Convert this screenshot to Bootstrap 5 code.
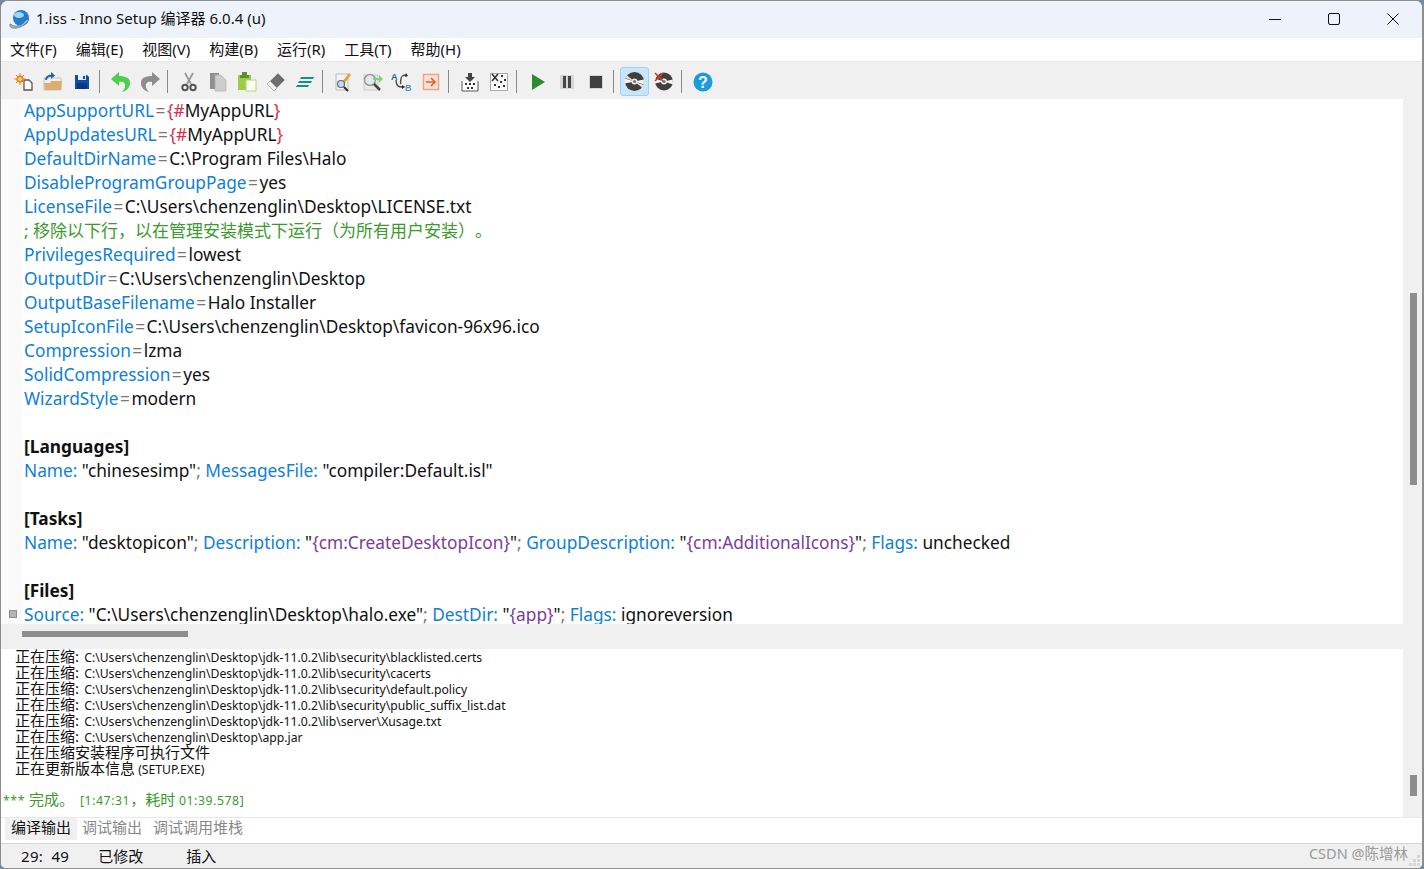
<!DOCTYPE html>
<html lang="zh-CN">
<head>
  <meta charset="UTF-8">
  <meta name="viewport" content="width=device-width, initial-scale=1.0">
  <title>1.iss - Inno Setup 编译器 6.0.4 (u)</title>
  <link href="https://cdn.jsdelivr.net/npm/bootstrap@5.3.3/dist/css/bootstrap.min.css" rel="stylesheet">
  <style>
    html, body { height: 100%; overflow: hidden; background: #6f8ba5; }
    body { font-family: "Noto Sans", "Noto Sans CJK SC", sans-serif; color: #111; text-spacing-trim: space-all; }
    .win { height: 869px; width: 1424px; background: #fff; border: 1px solid #8e8e8e; border-width: 1px 2px 1px 1px; border-radius: 8px 8px 6px 6px; overflow: hidden; }
    .titlebar { height: 37px; flex: none; background: #eef3fb; font-size: 15px; padding-left: 8px; }
    .titlebar .ttl { margin: -2px 0 0 5px; }
    .wbtn { width: 59px; height: 37px; margin-top: -2px; }
    .menubar { height: 24px; flex: none; font-size: 15px; padding-left: 9px; gap: 19px; border-bottom: 1px solid #e8e8e8; }
    .toolbar { height: 37px; flex: none; background: #f0f0f0; padding: 2px 0 0 8px; }
    .tb { width: 29px; height: 29px; flex: none; border: 1px solid transparent; border-radius: 3px; }
    .tb.on { background: #cce4f7; border-color: #99d1ff; }
    .tsep { width: 1px; height: 23px; background: #888; margin: 0 6px 0 3px; flex: none; }
    .editor { height: 525px; flex: none; }
    .gutter { width: 21px; flex: none; background: #fafafa; position: relative; }
    .mark { position: absolute; left: 8px; top: 511px; width: 6px; height: 6px; background: #b5b5b5; border: 1px solid #8f8f8f; }
    .code { font-size: 17.3px; line-height: 24px; overflow: hidden; padding-left: 2px; white-space: pre; }
    .k { color: #0f7fd8; } .c { color: #3a9a2c; }
    .p { color: #777; }
    .e { color: #777; padding: 0 1.5px; }
    .r { color: #d8304e; } .v { color: #7a3d9c; }
    .code .c { font-size: 17px; }
    .vbar { width: 19px; flex: none; background: #f0f0f0; }
    .vbar i { display: block; width: 7px; margin-left: 7px; background: #8e8e8e; }
    .thumb1 { height: 192px; margin-top: 194px; }
    .thumb2 { height: 21px; margin-top: 126px; }
    .hbar { height: 25px; flex: none; background: #f0f0f0; padding: 7px 0 0 21px; }
    .hbar i { display: block; width: 166px; height: 6px; background: #8e8e8e; }
    .output { height: 168px; flex: none; }
    .log { font-size: 12.2px; padding-left: 14px; margin-top: -1px; white-space: pre; }
    .log div { height: 16px; line-height: 16px; }
    .log b { font-weight: 400; font-size: 15px; letter-spacing: 0; }
    .log .path b { margin-right: 2px; }
    .log .done { color: #3a9a2c; margin: 15px 0 0 -12px; letter-spacing: .6px; }
    .done .m { margin: 0 6px 0 4px; }
    .tabs { height: 26px; flex: none; border-top: 1px solid #e8e8e8; font-size: 15px; padding-left: 4px; color: #888; }
    .tabs span { padding: 0 6px; line-height: 19px; height: 22px; margin-right: -1px; }
    .tabs .act { background: #f0f0f0; color: #111; }
    .statusbar { height: 25px; flex: none; background: #f0f0f0; border-top: 1px solid #d4d4d4; font-size: 15px; position: relative; }
    .statusbar > span { line-height: 24px; }
    .st-pos { margin-left: 20px; letter-spacing: .3px; }
    .st-mod { margin-left: 29px; }
    .st-ins { margin-left: 43px; }
    .wm { position: absolute; right: 14px; top: -3px; color: #9a9a9a; font-size: 14.5px; }
    .grip { position: absolute; right: 1px; bottom: 1px; }
  </style>
</head>
<body>
<div class="win d-flex flex-column">
  <div class="titlebar d-flex align-items-center">
    <svg width="22" height="22" viewBox="0 0 22 22"><circle cx="12" cy="9" r="8" fill="#1f7fcb"/><ellipse cx="10" cy="6" rx="5" ry="3" fill="#9fd6f7"/><path d="M1 15c-1 3 2 5 7 4 5-1 10-4 12-9l-3 1c-2 3-6 6-9 6-3 0-5 0-6-2z" fill="#9db3c4" stroke="#4f6f8a" stroke-width=".6"/></svg>
    <span class="ttl flex-grow-1">1.iss - Inno Setup 编译器 6.0.4 (u)</span>
    <span class="wbtn d-flex align-items-center justify-content-center"><svg width="12" height="12"><path d="M0 6.500h12" stroke="#111"/></svg></span>
    <span class="wbtn d-flex align-items-center justify-content-center"><svg width="12" height="12"><rect x=".5" y=".5" width="11" height="11" rx="1.500" fill="none" stroke="#111"/></svg></span>
    <span class="wbtn d-flex align-items-center justify-content-center"><svg width="12" height="12"><path d="M.5.5l11 11M11.500.5l-11 11" stroke="#111"/></svg></span>
  </div>
  <div class="menubar d-flex align-items-center bg-white">
    <span>文件(F)</span><span>编辑(E)</span><span>视图(V)</span><span>构建(B)</span><span>运行(R)</span><span>工具(T)</span><span>帮助(H)</span>
  </div>
  <div class="toolbar d-flex align-items-center">
    <span class="tb d-flex align-items-center justify-content-center"><svg width="20" height="20" viewBox="0 0 20 20"><path d="M10 8h5l3 3v7h-8z" fill="#fff" stroke="#555" stroke-width="1.300"/><circle cx="6" cy="7" r="3" fill="#ffe9a8" stroke="#e8891c" stroke-width="1.300"/><path d="M6 1v12M0 7h12M2 3l8 8M10 3l-8 8" stroke="#e8891c"/><circle cx="6" cy="7" r="1.500" fill="#ffd76a"/></svg></span>
    <span class="tb d-flex align-items-center justify-content-center"><svg width="20" height="20" viewBox="0 0 20 20"><path d="M1 6h17v12H1z" fill="#f5f1e8" stroke="#c9c4b6"/><path d="M1 11h6l1-2h11l-1 9H2z" fill="#dcae72"/><path d="M3 8c0-3 3-5 6-4" fill="none" stroke="#1566b8" stroke-width="2"/><path d="M8 0l4 3.500L8 7z" fill="#1566b8"/></svg></span>
    <span class="tb d-flex align-items-center justify-content-center"><svg width="18" height="18" viewBox="0 0 18 18"><path d="M2 2h12l2 2v12H2z" fill="#0d4fa0"/><rect x="5" y="2" width="8" height="5" fill="#e4edf7"/><rect x="10" y="3" width="2" height="3" fill="#0d4fa0"/><rect x="4" y="10" width="10" height="6" fill="#083a7c"/></svg></span>
    <span class="tsep"></span>
    <span class="tb d-flex align-items-center justify-content-center"><svg width="22" height="22" viewBox="0 0 22 22"><path d="M9 1L1 8l8 7v-4c4-1 7 1 6 5-.3 2-2 4-3 5 5-1 8-5 8-9 0-5-4-7-11-7z" fill="#4ccf4a"/></svg></span>
    <span class="tb d-flex align-items-center justify-content-center"><svg width="22" height="22" viewBox="0 0 22 22"><path d="M13 1l8 7-8 7v-4c-4-1-7 1-6 5 .3 2 2 4 3 5-5-1-8-5-8-9 0-5 4-7 11-7z" fill="#8d8d8d"/></svg></span>
    <span class="tsep"></span>
    <span class="tb d-flex align-items-center justify-content-center"><svg width="18" height="20" viewBox="0 0 18 20"><path d="M5 1l6 11M13 1L7 12" stroke="#9a9a9a" stroke-width="1.800"/><circle cx="5" cy="15.500" r="2.700" fill="none" stroke="#555" stroke-width="2"/><circle cx="13" cy="15.500" r="2.700" fill="none" stroke="#555" stroke-width="2"/></svg></span>
    <span class="tb d-flex align-items-center justify-content-center"><svg width="20" height="20" viewBox="0 0 20 20"><path d="M2 1h9v16H2z" fill="#8f8f8f"/><path d="M7 3h6l5 5v11H7z" fill="#cdcdcd" stroke="#aaa" stroke-width=".6"/></svg></span>
    <span class="tb d-flex align-items-center justify-content-center"><svg width="20" height="20" viewBox="0 0 20 20"><path d="M1 3h13v15H1z" fill="#9ccb45"/><path d="M5 3h5V0H5z" fill="#5d8f2a"/><path d="M3 3h9v3H3z" fill="#5d8f2a"/><path d="M9 8h10v11H9z" fill="#fbfbf4" stroke="#b7d487"/></svg></span>
    <span class="tb d-flex align-items-center justify-content-center"><svg width="20" height="20" viewBox="0 0 20 20"><path d="M12 1l7 7-8 8-7-7z" fill="#6e6e6e" stroke="#ccc"/><path d="M4 9l7 7-3 3-7-7z" fill="#f0f0f0" stroke="#999" stroke-width=".7"/></svg></span>
    <span class="tb d-flex align-items-center justify-content-center"><svg width="18" height="12" viewBox="0 0 18 12"><path d="M5 1h13l-1 2H4zM3 5h13l-1 2H2zM1 9h12l-1 2H0z" fill="#17917c"/></svg></span>
    <span class="tsep"></span>
    <span class="tb d-flex align-items-center justify-content-center"><svg width="20" height="20" viewBox="0 0 20 20"><path d="M2 2h12v16H2z" fill="#f4f4f4" stroke="#bbb"/><path d="M15 1l2 2-7 9-3 1 1-3z" fill="#e8a33c"/><circle cx="7" cy="12" r="3.500" fill="#c6d9ec" stroke="#667" stroke-width="1.200"/><path d="M10 15l4 4" stroke="#333" stroke-width="2.200"/></svg></span>
    <span class="tb d-flex align-items-center justify-content-center"><svg width="22" height="20" viewBox="0 0 22 20"><rect x="2" y="3" width="14" height="15" fill="#e8e8e8" stroke="#ccc"/><circle cx="8" cy="8" r="5.500" fill="#dcecec" stroke="#999" stroke-width="1.500"/><path d="M12 12l6 6" stroke="#444" stroke-width="2.500"/><path d="M11 6h6V3l4 4-4 4V8h-6z" fill="#82cf7e"/></svg></span>
    <span class="tb d-flex align-items-center justify-content-center"><svg width="21" height="20" viewBox="0 0 21 20"><path d="M5 8c0 2 0 4 2 6 1 1 3 1 5 1M15 3c-3 0-5 2-5 4-.5 2-1 4 0 5" fill="none" stroke="#444" stroke-width="1.300"/><path d="M15 1l2 3-3 1zM11 13l3 2-3 2z" fill="#222"/><text x="0" y="8" font-size="9" font-weight="700" fill="#1c5ea8" font-family="Liberation Sans, sans-serif">A</text><text x="14" y="19" font-size="9" font-weight="700" fill="#5d90c8" font-family="Liberation Sans, sans-serif">B</text></svg></span>
    <span class="tb d-flex align-items-center justify-content-center"><svg width="18" height="18" viewBox="0 0 18 18"><rect x="1.500" y="1.500" width="15" height="15" fill="#fde4da" stroke="#f4a184" stroke-width="1.500"/><path d="M4 9h9M9 5l4 4-4 4" fill="none" stroke="#ee5a22" stroke-width="1.700"/></svg></span>
    <span class="tsep"></span>
    <span class="tb d-flex align-items-center justify-content-center"><svg width="20" height="20" viewBox="0 0 20 20"><path d="M2 9v10h16V9" fill="#fff" stroke="#555"/><path d="M8 1h4v4h3l-5 5-5-5h3z" fill="#444"/><path d="M5 11h2v2H5zM9 11h2v2H9zM13 11h2v2h-2zM7 15h2v2H7zM11 15h2v2h-2z" fill="#333"/></svg></span>
    <span class="tb d-flex align-items-center justify-content-center"><svg width="20" height="20" viewBox="0 0 20 20"><rect x="1.500" y="1.500" width="17" height="17" fill="#f9f9f9" stroke="#aaa"/><path d="M3 2l6 7M9 2L3 9" stroke="#333" stroke-width="1.600"/><path d="M12 3h2v2h-2zM15 7h2v2h-2zM11 9h2v2h-2zM5 12h2v2H5zM9 14h2v2H9zM14 13h2v2h-2z" fill="#333"/></svg></span>
    <span class="tsep"></span>
    <span class="tb d-flex align-items-center justify-content-center"><svg width="18" height="18" viewBox="0 0 18 18"><path d="M3 1l13 8-13 8z" fill="#2f8a30"/></svg></span>
    <span class="tb d-flex align-items-center justify-content-center"><svg width="14" height="14" viewBox="0 0 14 14"><rect width="14" height="14" fill="#d5d5d5"/><path d="M3 1h3v12H3zM8 1h3v12H8z" fill="#454545"/></svg></span>
    <span class="tb d-flex align-items-center justify-content-center"><svg width="14" height="14" viewBox="0 0 14 14"><rect width="14" height="14" fill="#d5d5d5"/><rect x="1" y="1" width="12" height="12" fill="#3f3f3f"/></svg></span>
    <span class="tsep"></span>
    <span class="tb on d-flex align-items-center justify-content-center"><svg width="21" height="21" viewBox="0 0 21 21"><circle cx="10.500" cy="10.500" r="9.500" fill="#3f3f3f"/><path d="M10.500 10.500L1 7.500 .8 12.500zM10.500 10.500L20 13.500 19.800 8.500z" fill="#f4f4f4"/><path d="M10.500 10.500L1.500 7 3 4.500zM10.500 10.500l9 3.500-1.500 2.500z" fill="#e8e8e8"/><circle cx="10.500" cy="10.500" r="3" fill="#eee"/><circle cx="10.500" cy="10.500" r="1.600" fill="#777"/></svg></span>
    <span class="tb d-flex align-items-center justify-content-center"><svg width="21" height="21" viewBox="0 0 21 21"><circle cx="11" cy="10.500" r="9" fill="#3f3f3f"/><path d="M11 10.500L2 7.500 1.800 12.500zM11 10.500L20 13.500 19.800 8.500z" fill="#f4f4f4"/><circle cx="11" cy="10.500" r="3" fill="#eee"/><circle cx="11" cy="10.500" r="1.600" fill="#777"/><path d="M2 2l8 8M10 2l-8 8" stroke="#c8402f" stroke-width="1.600"/></svg></span>
    <span class="tsep"></span>
    <span class="tb d-flex align-items-center justify-content-center"><svg width="20" height="20" viewBox="0 0 20 20"><circle cx="10" cy="10" r="9.500" fill="#1c9bdc"/><text x="10" y="16" text-anchor="middle" font-size="16" font-weight="700" fill="#fff" font-family="Liberation Sans, sans-serif">?</text></svg></span>
  </div>
  <div class="editor d-flex">
    <div class="gutter"><span class="mark"></span></div>
    <div class="code flex-grow-1"><div><span class="k">AppSupportURL</span><span class="e">=</span><span class="r">{#</span>MyAppURL<span class="r">}</span></div><div><span class="k">AppUpdatesURL</span><span class="e">=</span><span class="r">{#</span>MyAppURL<span class="r">}</span></div><div><span class="k">DefaultDirName</span><span class="e">=</span>C:\Program Files\Halo</div><div><span class="k">DisableProgramGroupPage</span><span class="e">=</span>yes</div><div><span class="k">LicenseFile</span><span class="e">=</span>C:\Users\chenzenglin\Desktop\LICENSE.txt</div><div class="c">; 移除以下行，以在管理安装模式下运行（为所有用户安装）。</div><div><span class="k">PrivilegesRequired</span><span class="e">=</span>lowest</div><div><span class="k">OutputDir</span><span class="e">=</span>C:\Users\chenzenglin\Desktop</div><div><span class="k">OutputBaseFilename</span><span class="e">=</span>Halo Installer</div><div><span class="k">SetupIconFile</span><span class="e">=</span>C:\Users\chenzenglin\Desktop\favicon-96x96.ico</div><div><span class="k">Compression</span><span class="e">=</span>lzma</div><div><span class="k">SolidCompression</span><span class="e">=</span>yes</div><div><span class="k">WizardStyle</span><span class="e">=</span>modern</div><div>&nbsp;</div><div class="fw-bold">[Languages]</div><div><span class="k">Name:</span> "chinesesimp"<span class="p">;</span> <span class="k">MessagesFile:</span> "compiler:Default.isl"</div><div>&nbsp;</div><div class="fw-bold">[Tasks]</div><div><span class="k">Name:</span> "desktopicon"<span class="p">;</span> <span class="k">Description:</span> "<span class="v">{cm:CreateDesktopIcon}</span>"<span class="p">;</span> <span class="k">GroupDescription:</span> "<span class="v">{cm:AdditionalIcons}</span>"<span class="p">;</span> <span class="k">Flags:</span> unchecked</div><div>&nbsp;</div><div class="fw-bold">[Files]</div><div><span class="k">Source:</span> "C:\Users\chenzenglin\Desktop\halo.exe"<span class="p">;</span> <span class="k">DestDir:</span> "<span class="v">{app}</span>"<span class="p">;</span> <span class="k">Flags:</span> ignoreversion</div></div>
    <div class="vbar"><i class="thumb1"></i></div>
  </div>
  <div class="hbar"><i></i></div>
  <div class="output d-flex">
    <div class="log flex-grow-1"><div class="path"><b>正在压缩:</b> C:\Users\chenzenglin\Desktop\jdk-11.0.2\lib\security\blacklisted.certs</div><div class="path"><b>正在压缩:</b> C:\Users\chenzenglin\Desktop\jdk-11.0.2\lib\security\cacerts</div><div class="path"><b>正在压缩:</b> C:\Users\chenzenglin\Desktop\jdk-11.0.2\lib\security\default.policy</div><div class="path"><b>正在压缩:</b> C:\Users\chenzenglin\Desktop\jdk-11.0.2\lib\security\public_suffix_list.dat</div><div class="path"><b>正在压缩:</b> C:\Users\chenzenglin\Desktop\jdk-11.0.2\lib\server\Xusage.txt</div><div class="path"><b>正在压缩:</b> C:\Users\chenzenglin\Desktop\app.jar</div><div><b>正在压缩安装程序可执行文件</b></div><div><b>正在更新版本信息</b> (SETUP.EXE)</div><div class="done">***<b class="m">完成。</b>[1:47:31<b>，耗时</b> 01:39.578]</div></div>
    <div class="vbar"><i class="thumb2"></i></div>
  </div>
  <div class="tabs d-flex align-items-start bg-white">
    <span class="act">编译输出</span><span>调试输出</span><span>调试调用堆栈</span>
  </div>
  <div class="statusbar d-flex">
    <span class="st-pos">29:&nbsp; 49</span><span class="st-mod">已修改</span><span class="st-ins">插入</span>
    <span class="wm">CSDN @陈增林</span>
    <svg class="grip" width="12" height="12" viewBox="0 0 12 12"><path d="M8 0h3v3H8zM4 4h3v3H4zM8 4h3v3H8zM0 8h3v3H0zM4 8h3v3H4zM8 8h3v3H8z" fill="#d6d6d6"/></svg>
  </div>
</div>
<script src="https://cdn.jsdelivr.net/npm/bootstrap@5.3.3/dist/js/bootstrap.bundle.min.js"></script>
</body>
</html>
